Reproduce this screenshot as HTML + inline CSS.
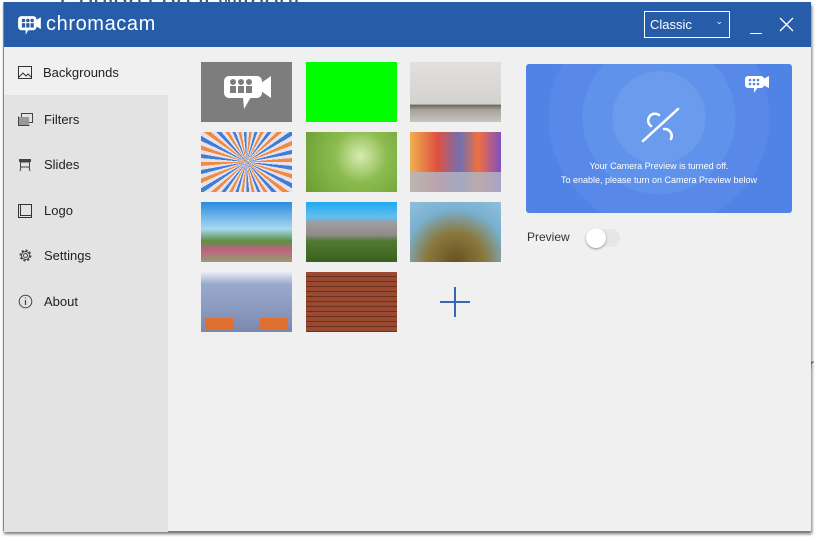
<!DOCTYPE html>
<html><head><meta charset="utf-8"><style>
*{margin:0;padding:0;box-sizing:border-box}
body{width:815px;height:537px;background:#fff;position:relative;overflow:hidden;font-family:"Liberation Sans",sans-serif}
#win{position:absolute;left:3px;top:2px;width:808px;height:529px;background:#f0f0f0;border-left:1px solid #888;box-shadow:1px 3px 3px rgba(0,0,0,.55)}
#title{position:absolute;left:0;top:0;width:807px;height:45px;background:#265ca8}
#side{position:absolute;left:0;top:45px;width:164px;height:485px;background:#e3e3e3}
.sel{position:absolute;left:0;top:45px;width:164px;height:48px;background:#f0f0f0}
.item{position:absolute;left:14px;font-size:13px;color:#222;display:flex;align-items:center}
.item svg{margin-right:11px}
.t{position:absolute;width:91px;height:60px}
</style></head><body>
<div style="position:absolute;left:60px;top:-14px;font-size:26px;color:#555">Couldn't do it without</div>
<div style="position:absolute;left:809px;top:356px;font-size:14px;color:#333">r</div>
<div id="win">
<div id="title">
 <svg style="position:absolute;left:13px;top:12px" width="26" height="26" viewBox="0 0 24 24"><rect x="1" y="2" width="17" height="13" rx="3" fill="#fff"/><path d="M17 6l5-3v11l-5-3z" fill="#fff"/><path d="M8 14l3 0-3 5z" fill="#fff"/><g fill="#265ca8"><circle cx="6" cy="6" r="1.6"/><circle cx="10" cy="6" r="1.6"/><circle cx="14" cy="6" r="1.6"/><rect x="4.5" y="8.5" width="3" height="4"/><rect x="8.5" y="8.5" width="3" height="4"/><rect x="12.5" y="8.5" width="3" height="4"/></g></svg>
 <div style="position:absolute;left:42px;top:11px;color:#fff;font-size:20px;letter-spacing:.6px">chromacam</div>
 <div style="position:absolute;left:640px;top:9px;width:86px;height:27px;border:1px solid #fff;color:#fff;font-size:13px;padding:5px 0 0 5px">Classic<span style="position:absolute;right:6px;top:4px;font-size:9px">⌄</span></div>
 <div style="position:absolute;left:746px;top:31px;width:12px;height:1px;background:#fff"></div>
 <svg style="position:absolute;left:775px;top:15px" width="15" height="15"><path d="M1 1L14 14M14 1L1 14" stroke="#fff" stroke-width="1.3"/></svg>
</div>
<div id="side"></div>
<div class="sel"></div>
<div class="item" style="top:63px"><svg width="14" height="13"><rect x=".5" y=".5" width="13" height="12" fill="none" stroke="#333"/><path d="M1 11l4-4 3 3 2-2 3 3" fill="none" stroke="#333"/></svg>Backgrounds</div>
<div class="item" style="top:110px;left:14px"><svg width="15" height="13"><rect x="3.5" y=".5" width="11" height="9" fill="none" stroke="#444"/><path d="M.5 3.5v9h11" fill="none" stroke="#444"/><rect x="1" y="4" width="10" height="8" fill="#999"/></svg>Filters</div>
<div class="item" style="top:155px;left:14px"><svg width="15" height="14"><rect x="1" y="1" width="12" height="3" fill="#444"/><rect x="2.5" y="4" width="9" height="5" fill="none" stroke="#444"/><path d="M3 9l-1 4M11 9l1 4" stroke="#444"/></svg>Slides</div>
<div class="item" style="top:201px;left:14px"><svg width="15" height="14"><rect x=".5" y=".5" width="13" height="13" fill="none" stroke="#333"/><path d="M2.5 .5v11h11" fill="none" stroke="#333"/></svg>Logo</div>
<div class="item" style="top:246px;left:14px"><svg width="15" height="15" viewBox="0 0 15 15"><circle cx="7.5" cy="7.5" r="5" fill="none" stroke="#444" stroke-width="2" stroke-dasharray="2 1.9"/><circle cx="7.5" cy="7.5" r="4" fill="none" stroke="#444"/><circle cx="7.5" cy="7.5" r="2" fill="none" stroke="#444"/></svg>Settings</div>
<div class="item" style="top:292px;left:14px"><svg width="15" height="15"><circle cx="7.5" cy="7.5" r="6.3" fill="none" stroke="#444"/><path d="M7.5 6v5M7.5 3.5v1" stroke="#444" stroke-width="1.2"/></svg>About</div>

<div class="t" style="left:197px;top:60px;background:#7d7d7d"><svg style="position:absolute;left:20px;top:9px" width="54" height="42" viewBox="0 0 54 42"><rect x="3" y="5" width="38" height="22" rx="5" fill="#fff"/><path d="M40 12l10-7v22l-10-7z" fill="#fff"/><path d="M22 26l8 0-7 12z" fill="#fff"/><g fill="#7d7d7d"><circle cx="12" cy="11" r="3"/><circle cx="20" cy="11" r="3"/><circle cx="28" cy="11" r="3"/><rect x="9" y="15" width="6" height="7"/><rect x="17" y="15" width="6" height="7"/><rect x="25" y="15" width="6" height="7"/></g></svg></div>
<div class="t" style="left:302px;top:60px;background:#00fe00"></div>
<div class="t" style="left:406px;top:60px;background:linear-gradient(#e2e0dc 0,#d4d2ce 70%,#6d6760 72%,#a8a39c 80%,#c8c5c0 100%)"></div>
<div class="t" style="left:197px;top:130px;background:repeating-conic-gradient(from 0deg at 50% 50%,#e8e0ea 0 5deg,#f08a3c 5deg 10deg,#e8e0ea 10deg 15deg,#3c7fd4 15deg 20deg)"></div>
<div class="t" style="left:302px;top:130px;background:radial-gradient(circle at 60% 40%,#d8ecb0,#8cbc50 40%,#6a9c30 100%)"></div>
<div class="t" style="left:406px;top:130px;background:linear-gradient(90deg,#f0b050,#e05040 30%,#7070b0 55%,#f07040 75%,#8050c0);"><div style="position:absolute;bottom:0;left:0;width:100%;height:20px;background:#b0b8c8;opacity:.8"></div></div>
<div class="t" style="left:197px;top:200px;background:linear-gradient(#2a8ce0,#a8d8f0 45%,#5a9040 65%,#c06080 80%,#90a070)"></div>
<div class="t" style="left:302px;top:200px;background:linear-gradient(#20a8f0 0,#60c0f0 25%,#a09ca0 35%,#908a88 55%,#507a30 65%,#3a6020 100%)"></div>
<div class="t" style="left:406px;top:200px;background:radial-gradient(circle at 50% 100%,#6a5020,#8a7a40 40%,#7ab0d0 70%,#90c0d8)"></div>
<div class="t" style="left:197px;top:270px;background:linear-gradient(#e8ecf4 0,#9aaace 20%,#8896bc 70%,#7a88b0 100%)"><div style="position:absolute;left:4px;bottom:2px;width:28px;height:12px;background:#e07030"></div><div style="position:absolute;right:4px;bottom:2px;width:28px;height:12px;background:#e07030"></div></div>
<div class="t" style="left:302px;top:270px;background:repeating-linear-gradient(#9a4a30 0 4px,#6a3020 4px 5px)"></div>
<svg style="position:absolute;left:435px;top:284px" width="32" height="32"><path d="M16 1v30M1 16h30" stroke="#3a66b0" stroke-width="2"/></svg>

<div style="position:absolute;left:522px;top:62px;width:266px;height:149px;border-radius:3px;background:radial-gradient(circle at 50% 36%,#6b9bec 0,#6b9bec 46px,#5f92eb 47px,#5f92eb 76px,#5889e8 77px,#5889e8 110px,#5083e6 111px);overflow:hidden">
 <svg style="position:absolute;left:218px;top:10px" width="28" height="24" viewBox="0 0 28 24"><rect x="1" y="2" width="19" height="12" rx="3" fill="#fff"/><path d="M19 5l6-3v12l-6-3z" fill="#fff"/><path d="M10 13h4l-4 6z" fill="#fff"/><g fill="#5083e6"><circle cx="6" cy="6" r="1.3"/><circle cx="10" cy="6" r="1.3"/><circle cx="14" cy="6" r="1.3"/><circle cx="6" cy="10" r="1.3"/><circle cx="10" cy="10" r="1.3"/><circle cx="14" cy="10" r="1.3"/></g></svg>
 <svg style="position:absolute;left:114px;top:42px" width="40" height="38" viewBox="0 0 40 38"><path d="M3 35L38 3" stroke="#fff" stroke-width="2.5" stroke-linecap="round"/><path d="M11 20a6 6 0 0 1 8-11" fill="none" stroke="#fff" stroke-width="2.5" stroke-linecap="round"/><path d="M24 23a7 7 0 0 1 7 10" fill="none" stroke="#fff" stroke-width="2.5" stroke-linecap="round"/></svg>
 <div style="position:absolute;left:0;width:100%;top:95px;text-align:center;color:#fff;font-size:9px;line-height:14px">Your Camera Preview is turned off.<br>To enable, please turn on Camera Preview below</div>
</div>
<div style="position:absolute;left:523px;top:228px;font-size:12px;color:#333">Preview</div>
<div style="position:absolute;left:583px;top:227px;width:33px;height:18px;border-radius:9px;background:#e6e6e6"></div>
<div style="position:absolute;left:582px;top:226px;width:20px;height:20px;border-radius:50%;background:#fff;box-shadow:0 1px 2px rgba(0,0,0,.4)"></div>
</div>
</body></html>
